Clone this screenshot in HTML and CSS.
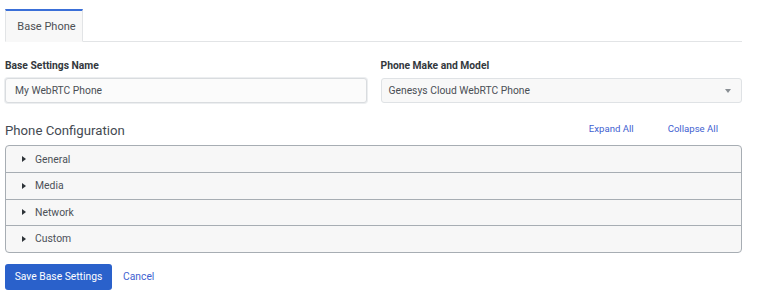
FILE: index.html
```html
<!DOCTYPE html>
<html>
<head>
<meta charset="utf-8">
<link rel="stylesheet" href="styles.css">
</head>
<body>
<div class="page">
  <div class="tabs">
    <div class="tab active">Base Phone</div>
  </div>
  <div class="fields">
    <div class="field">
      <label class="label">Base Settings Name</label>
      <div class="input">My WebRTC Phone</div>
    </div>
    <div class="field">
      <label class="label">Phone Make and Model</label>
      <div class="input select">
        <span>Genesys Cloud WebRTC Phone</span>
        <span class="caret"></span>
      </div>
    </div>
  </div>
  <div class="config-head">
    <h2 class="title">Phone Configuration</h2>
    <div class="links">
      <a class="link">Expand All</a>
      <a class="link">Collapse All</a>
    </div>
  </div>
  <div class="accordion">
    <div class="row"><span class="tri"></span>General</div>
    <div class="row"><span class="tri"></span>Media</div>
    <div class="row"><span class="tri"></span>Network</div>
    <div class="row"><span class="tri"></span>Custom</div>
  </div>
  <div class="actions">
    <button class="btn">Save Base Settings</button>
    <a class="link cancel">Cancel</a>
  </div>
</div>
</body>
</html>
```
FILE: styles.css
```css
html, body {
  margin: 0;
  padding: 0;
  background: #fff;
}
body {
  font-family: Roboto, "Liberation Sans", sans-serif;
  color: #444a52;
}
.page {
  width: 737px;
  padding: 9px 0 0 5px;
}
.tabs {
  display: flex;
  border-bottom: 1px solid #e2e4e6;
}
.tab {
  width: 78px;
  height: 33px;
  box-sizing: border-box;
  margin-bottom: -1px;
  display: flex;
  align-items: center;
  justify-content: center;
  padding-left: 5px;
  font-size: 11px;
  color: #4c5054;
  background: #f8f8f8;
  border: 1px solid #e2e4e6;
  border-bottom-color: #f8f8f8;
  border-top: 2px solid #3a6fd8;
}
.fields {
  display: flex;
  gap: 14px;
  margin-top: 17px;
}
.field {
  flex: 1;
  display: flex;
  flex-direction: column;
}
.label {
  font-size: 10.3px;
  font-weight: 700;
  color: #33383d;
  line-height: 13px;
  margin-bottom: 6px;
}
.input {
  height: 25px;
  box-sizing: border-box;
  border: 1px solid #dfe2e5;
  border-radius: 3px;
  background: #fbfbfb;
  font-size: 10.3px;
  color: #4a4f55;
  padding: 0 9px;
  display: flex;
  align-items: center;
}
.field:first-child .input {
  border-color: #d9dcdf;
  box-shadow: 0 0 0 1px #eceef0;
}
.select {
  justify-content: space-between;
  background: #f8f8f8;
  padding-left: 7px;
}
.caret {
  width: 0;
  height: 0;
  border-left: 3.5px solid transparent;
  border-right: 3.5px solid transparent;
  border-top: 4px solid #8a8f94;
  margin-right: 1px;
}
.config-head {
  display: flex;
  justify-content: space-between;
  align-items: center;
  margin-top: 17px;
  height: 20px;
}
.title {
  margin: 0;
  font-size: 13.2px;
  font-weight: 400;
  color: #444a52;
}
.links {
  display: flex;
  gap: 34px;
  margin-right: 24px;
  margin-top: -4px;
}
.link {
  font-size: 9.6px;
  color: #3f5fd1;
  text-decoration: none;
}
.accordion {
  margin-top: 5px;
  border: 1px solid #a7adb3;
  border-radius: 4px;
  background: #f7f7f7;
  overflow: hidden;
}
.row {
  height: 25.5px;
  display: flex;
  align-items: center;
  font-size: 10.4px;
  color: #4c5157;
  padding-left: 16px;
  border-top: 1px solid #a7adb3;
}
.row:first-child {
  border-top: none;
  height: 26px;
}
.tri {
  width: 0;
  height: 0;
  border-top: 3px solid transparent;
  border-bottom: 3px solid transparent;
  border-left: 4px solid #2e3338;
  margin-right: 9px;
}
.actions {
  display: flex;
  align-items: center;
  gap: 11px;
  margin-top: 11px;
}
.btn {
  font-family: Roboto, "Liberation Sans", sans-serif;
  background: #2a61cb;
  color: #fff;
  border: none;
  border-radius: 3px;
  height: 26px;
  width: 107px;
  font-size: 10.3px;
  padding: 0;
}
.cancel {
  font-size: 10.3px;
}
```
